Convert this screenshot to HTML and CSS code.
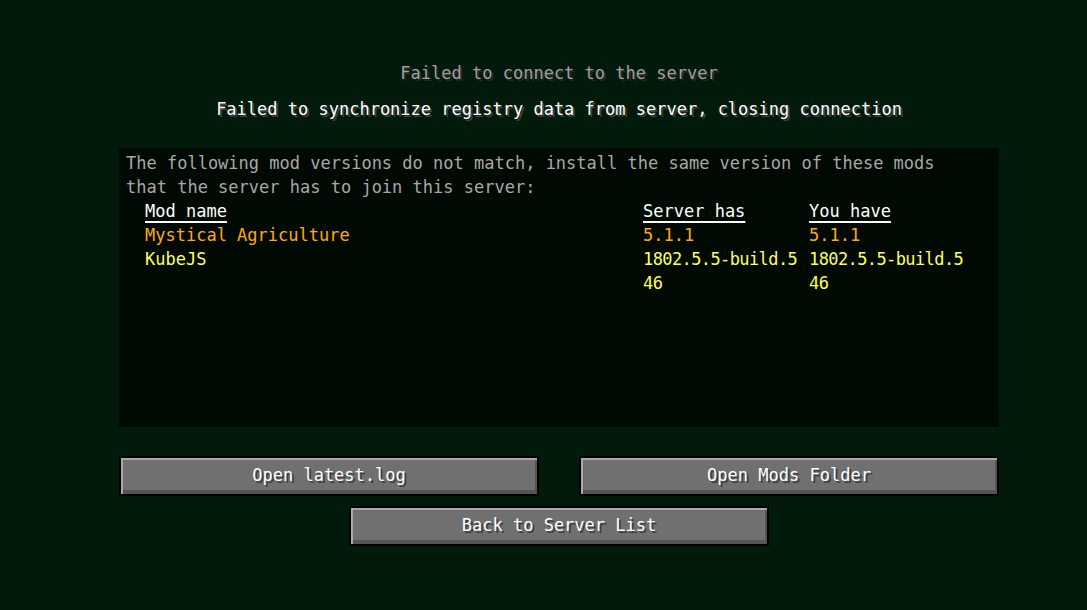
FILE: index.html
```html
<!DOCTYPE html>
<html lang="en">
<head>
<meta charset="utf-8">
<title>Failed to connect to the server</title>
<link rel="stylesheet" href="styles.css">
</head>
<body>
<div class="screen">
  <div class="title">Failed to connect to the server</div>
  <div class="subtitle">Failed to synchronize registry data from server, closing connection</div>
  <div class="panel">
    <p class="intro">The following mod versions do not match, install the same version of these mods that the server has to join this server:</p>
    <div class="table">
      <div class="head">Mod name</div>
      <div class="head">Server has</div>
      <div class="head">You have</div>
      <div class="gold">Mystical Agriculture</div>
      <div class="gold">5.1.1</div>
      <div class="gold">5.1.1</div>
      <div class="yellow">KubeJS</div>
      <div class="yellow ver">1802.5.5-build.5<br>46</div>
      <div class="yellow ver">1802.5.5-build.5<br>46</div>
    </div>
  </div>
  <div class="buttons">
    <div class="btn">Open latest.log</div>
    <div class="btn">Open Mods Folder</div>
    <div class="btn wide">Back to Server List</div>
  </div>
</div>
</body>
</html>
```

FILE: styles.css
```css
html, body {
  margin: 0;
  padding: 0;
}
body {
  width: 1087px;
  height: 610px;
  background: #021a09;
  font-family: "DejaVu Sans Mono", "Liberation Mono", monospace;
  font-weight: normal;
  font-size: 17px;
  line-height: 24px;
  overflow: hidden;
}
.screen {
  width: 880px;
  margin-left: 119px;
  padding-top: 61px;
  display: flex;
  flex-direction: column;
}
.title {
  text-align: center;
  color: #a0a0a0;
  text-shadow: 2px 2px 0 #282828;
}
.subtitle {
  margin-top: 12px;
  text-align: center;
  color: #ffffff;
  text-shadow: 2px 2px 0 #3f3f3f;
}
.panel {
  margin-top: 27px;
  height: 279px;
  box-sizing: border-box;
  background: #010a02;
  padding: 3px 8px 0 7px;
}
.intro {
  margin: 0;
  max-width: 830px;
  color: #a8a8a8;
}
.table {
  display: grid;
  grid-template-columns: 498px 166px auto;
  margin-left: 19px;
}
.head {
  color: #ffffff;
  text-decoration: underline;
  text-decoration-thickness: 2px;
  text-underline-offset: 4px;
}
.gold {
  color: #ffaa00;
}
.yellow {
  color: #ffff55;
}
.ver {
  letter-spacing: -0.6px;
}
.buttons {
  margin-top: 29px;
  display: flex;
  flex-wrap: wrap;
  justify-content: space-between;
  row-gap: 10px;
}
.btn {
  width: 420px;
  height: 40px;
  box-sizing: border-box;
  border: 2px solid #000;
  background-color: #707070;
  box-shadow: inset 2px 2px 0 #a9a9a9, inset -2px -4px 0 #555555;
  color: #ffffff;
  text-shadow: 2px 2px 0 #3f3f3f;
  display: flex;
  align-items: center;
  justify-content: center;
  padding-bottom: 2px;
}
.wide {
  margin: 0 auto;
}
```
